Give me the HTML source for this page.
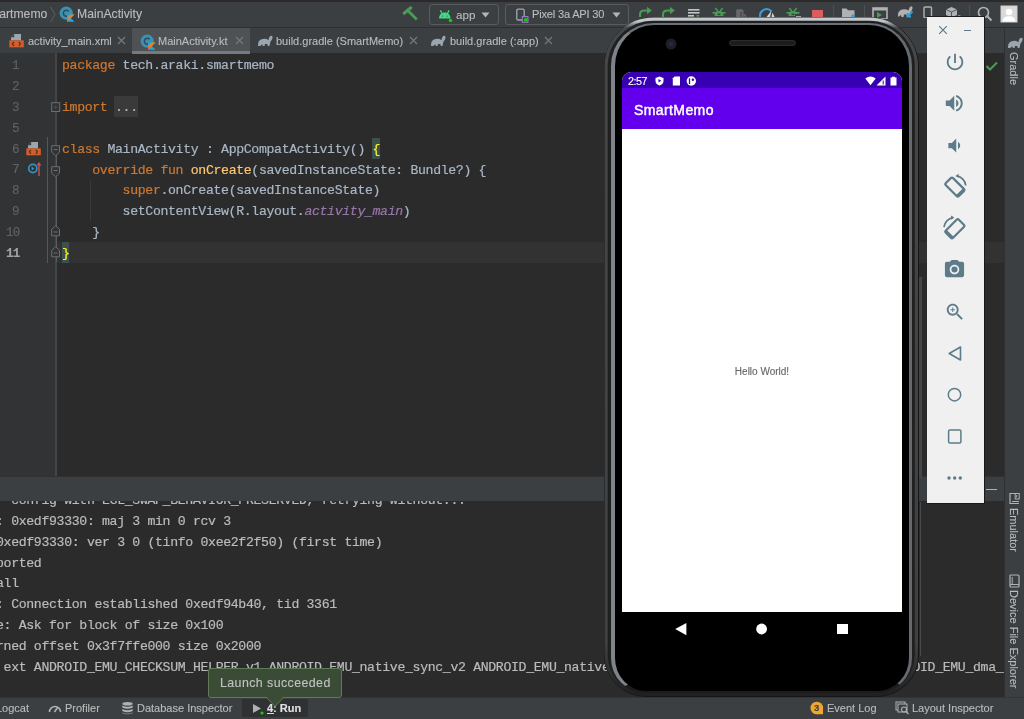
<!DOCTYPE html>
<html><head><meta charset="utf-8">
<style>
*{margin:0;padding:0;box-sizing:border-box}
html,body{width:1024px;height:719px;overflow:hidden;background:#2b2b2b}
body{position:relative;font-family:"Liberation Sans",sans-serif}
.a{position:absolute}
.t{white-space:pre;line-height:1;will-change:transform;-webkit-text-stroke:0.12px}
</style></head><body>
<div class="a" style="left:0px;top:0px;width:1024px;height:2px;background:#2c292b;"></div>
<div class="a" style="left:0px;top:2px;width:1024px;height:25px;background:#3c3f41;"></div>
<div class="a" style="left:0px;top:27px;width:1024px;height:1px;background:#2c2e2f;"></div>
<div class="a" style="left:0px;top:28px;width:1004px;height:25px;background:#3c3f41;"></div>
<div class="a" style="left:0px;top:53px;width:55.5px;height:424px;background:#313335;"></div>
<div class="a" style="left:55.2px;top:53px;width:1.6px;height:424px;background:#434547;"></div>
<div class="a" style="left:56.5px;top:241.5px;width:947.5px;height:21px;background:#323232;"></div>
<div class="a t" style="right:977px;top:8.23px;font-family:'Liberation Sans';font-size:12.2px;color:#bbbbbb;font-weight:400;">smartmemo</div>
<svg class="a" style="left:49px;top:6px;" width="8" height="17" viewBox="0 0 8 17"><path d="M1.5 1 L6 8.5 L1.5 16" fill="none" stroke="#5d5f61" stroke-width="1"/></svg>
<svg class="a" style="left:58.7px;top:6.199999999999999px;" width="17" height="17" viewBox="0 0 17 17"><circle cx="7.2" cy="7.2" r="6.6" fill="#3f8fae"/><path d="M9.6 5.2 A3 3 0 1 0 9.6 9.2" fill="none" stroke="#24505f" stroke-width="1.5"/><rect x="7.2" y="7.5" width="8" height="8" fill="#3c3f41" opacity="0"/><path d="M8 8.5 H15.5 L11.8 12 L15.5 15.8 H8 Z" fill="#1ea7e8"/><path d="M8 15.8 V12 L11.8 8.5 H15.5 Z" fill="#f0811a"/><path d="M8 15.8 V13.5 L9.8 11.6 Z" fill="#d14b8f"/></svg>
<div class="a t" style="left:77px;top:8.23px;font-family:'Liberation Sans';font-size:12.2px;color:#bbbbbb;font-weight:400;">MainActivity</div>
<svg class="a" style="left:398px;top:2px;" width="24" height="24" viewBox="0 0 24 24"><path d="M6.2 11.2 L12.8 5.8" stroke="#4a9c55" stroke-width="3.1" stroke-linecap="round"/><path d="M9.8 8.6 L17.8 16.6" stroke="#4a9c55" stroke-width="2.8" stroke-linecap="square"/></svg>
<div class="a" style="left:428.5px;top:4px;width:70px;height:20.5px;border:1px solid #595c5e;border-radius:3px"></div>
<svg class="a" style="left:437px;top:8px;" width="16" height="14" viewBox="0 0 16 14"><path d="M2 10.6 C2 6.8 4.6 4.6 7.75 4.6 C10.9 4.6 13.5 6.8 13.5 10.6 Z" fill="#3ddc84"/><path d="M3.4 2.4 L5.1 5.6 M12.1 2.4 L10.4 5.6" stroke="#3ddc84" stroke-width="1.2"/><circle cx="5.4" cy="8.2" r="0.6" fill="#2a7a50"/><circle cx="10.1" cy="8.2" r="0.6" fill="#2a7a50"/></svg>
<svg class="a" style="left:448px;top:17.5px;" width="5" height="5" viewBox="0 0 5 5"><circle cx="2.5" cy="2.5" r="1.7" fill="#0bd60b"/></svg>
<div class="a t" style="left:456px;top:9.04px;font-family:'Liberation Sans';font-size:11.6px;color:#bbbbbb;font-weight:400;">app</div>
<svg class="a" style="left:481px;top:11.5px;" width="9" height="6" viewBox="0 0 9 6"><path d="M0.5 0.5 H8.5 L4.5 5.5 Z" fill="#b4b4b4"/></svg>
<div class="a" style="left:504.5px;top:4px;width:124.5px;height:20.5px;border:1px solid #595c5e;border-radius:3px"></div>
<svg class="a" style="left:515px;top:7.5px;" width="15" height="16" viewBox="0 0 15 16"><rect x="1.8" y="1.2" width="7.4" height="10.8" rx="1.2" fill="none" stroke="#9ea9b2" stroke-width="1.3"/><rect x="7.3" y="8.6" width="5.6" height="5.6" fill="#3c3f41" stroke="#a07ccb" stroke-width="1.1"/><circle cx="10.6" cy="11.7" r="1.8" fill="#0bd60b"/></svg>
<div class="a t" style="left:532px;top:8.87px;font-family:'Liberation Sans';font-size:11.1px;color:#bbbbbb;font-weight:400;letter-spacing:-0.2px;">Pixel 3a API 30</div>
<svg class="a" style="left:611.5px;top:11.5px;" width="9" height="6" viewBox="0 0 9 6"><path d="M0.5 0.5 H8.5 L4.5 5.5 Z" fill="#b4b4b4"/></svg>
<svg class="a" style="left:638px;top:6px;" width="15" height="12" viewBox="0 0 15 12"><path d="M2 11 V8.5 Q2 4.5 6.5 4.5 H9.5" fill="none" stroke="#499c54" stroke-width="2"/><path d="M9 0.8 L13.8 4.5 L9 8.2 Z" fill="#499c54"/></svg>
<svg class="a" style="left:661px;top:6px;" width="15" height="12" viewBox="0 0 15 12"><path d="M2 11 V8.5 Q2 4.5 6.5 4.5 H9.5" fill="none" stroke="#499c54" stroke-width="2"/><path d="M9 0.8 L13.8 4.5 L9 8.2 Z" fill="#499c54"/></svg>
<svg class="a" style="left:688px;top:9px;" width="14" height="10" viewBox="0 0 14 10"><rect x="0" y="0" width="11.5" height="1.6" fill="#c4c4c4"/><rect x="0" y="3" width="11.5" height="1.6" fill="#c4c4c4"/><rect x="0" y="6" width="6" height="1.6" fill="#c4c4c4"/><rect x="8.5" y="6" width="2.5" height="1.6" fill="#499c54"/></svg>
<svg class="a" style="left:712px;top:6px;" width="15" height="12" viewBox="0 0 15 12"><path d="M3.3 2 L5.8 5 M10.7 2 L8.2 5" stroke="#499c54" stroke-width="1.5"/><path d="M3 6.2 Q7 3.6 11 6.2 L11.5 10 H2.5 Z" fill="#499c54"/><path d="M0.5 6.8 H13.5" stroke="#499c54" stroke-width="1.6"/><ellipse cx="7" cy="8.3" rx="1.7" ry="0.9" fill="#3c3f41"/></svg>
<svg class="a" style="left:735px;top:8px;" width="12" height="10" viewBox="0 0 12 10"><path d="M1.2 9 V2.4 Q1.2 1.2 2.4 1.2 H6.8 Q8.5 1.2 8.5 3 V9 Z" fill="#686868"/><path d="M8.5 6.5 Q10.3 6.5 10.8 9" fill="none" stroke="#686868" stroke-width="1.4"/><rect x="5" y="4" width="2" height="5" fill="#505050"/></svg>
<svg class="a" style="left:758px;top:6px;" width="18" height="12" viewBox="0 0 18 12"><path d="M2.2 11 A6.5 6.5 0 0 1 13.5 5.5" fill="none" stroke="#389fd6" stroke-width="2"/><path d="M8.5 11 L13.5 4.8 L12 11 Z" fill="#d5d5d5"/><path d="M14.5 6.5 L16.5 11 H13.5 Z" fill="#d5d5d5"/></svg>
<svg class="a" style="left:786px;top:6px;" width="15" height="12" viewBox="0 0 15 12"><path d="M3.3 2 L5.8 5 M10.7 2 L8.2 5" stroke="#499c54" stroke-width="1.5"/><path d="M3 6.2 Q7 3.6 11 6.2 L11.5 10 H2.5 Z" fill="#499c54"/><path d="M0.5 6.8 H13.5" stroke="#499c54" stroke-width="1.6"/><ellipse cx="7" cy="8.3" rx="1.7" ry="0.9" fill="#3c3f41"/><rect x="9" y="8" width="6" height="4" fill="#3c3f41"/><path d="M10 11 H15" stroke="#d5d5d5" stroke-width="1.4"/></svg>
<div class="a" style="left:812px;top:10px;width:11px;height:8px;background:#db5c5c;"></div>
<div class="a" style="left:833px;top:5px;width:1px;height:18px;background:#4d5052;"></div>
<svg class="a" style="left:841px;top:7px;" width="15" height="12" viewBox="0 0 15 12"><path d="M1 1.5 H5.5 L7 3.2 H13.5 V11 H1 Z" fill="#afb1b3"/><rect x="10.5" y="7.5" width="3.2" height="3.2" fill="#389fd6"/></svg>
<div class="a" style="left:864px;top:5px;width:1px;height:18px;background:#4d5052;"></div>
<svg class="a" style="left:872px;top:7px;" width="16" height="12" viewBox="0 0 16 12"><rect x="1" y="1" width="14" height="11" fill="none" stroke="#afb1b3" stroke-width="1.6"/><rect x="1" y="1" width="14" height="2.5" fill="#afb1b3"/><path d="M5 5 L10 8 L5 11 Z" fill="#499c54"/></svg>
<svg class="a" style="left:896px;top:5px;" width="18" height="13" viewBox="0 0 18 13"><path d="M2 12 Q1 6 6 4.5 Q10 3.5 12.5 5.5 Q13 2 15 1.2 Q17 1 16.5 3.5 Q16 6 14 7.5 L13 12 H11 L10.5 9.5 H8 L7.5 12 H5.5 L5 10 Z" fill="#afb1b3"/><path d="M16.5 6.5 L11.5 11.5 M11.5 8 V11.5 H15" stroke="#389fd6" stroke-width="1.8" fill="none"/></svg>
<svg class="a" style="left:922px;top:6px;" width="12" height="12" viewBox="0 0 12 12"><rect x="2" y="1" width="7.5" height="11" rx="1" fill="none" stroke="#afb1b3" stroke-width="1.4"/></svg>
<svg class="a" style="left:945px;top:6px;" width="16" height="12" viewBox="0 0 16 12"><path d="M6.5 1 L12 3.5 V9 L6.5 11.5 L1 9 V3.5 Z" fill="#afb1b3"/><path d="M1 3.5 L6.5 6 L12 3.5 M6.5 6 V11.5" stroke="#3c3f41" stroke-width="0.8" fill="none"/><rect x="13" y="9" width="2.5" height="3" fill="#389fd6"/></svg>
<div class="a" style="left:969px;top:5px;width:1px;height:18px;background:#4d5052;"></div>
<svg class="a" style="left:976px;top:5px;" width="18" height="18" viewBox="0 0 18 18"><circle cx="7.5" cy="7.5" r="5" fill="none" stroke="#afb1b3" stroke-width="1.7"/><path d="M11 11 L15.5 15.5" stroke="#afb1b3" stroke-width="2"/></svg>
<svg class="a" style="left:1000px;top:5px;" width="18" height="18" viewBox="0 0 18 18"><rect x="0.5" y="0.5" width="17" height="17" fill="#cfcfcf"/><rect x="1.5" y="1.5" width="15" height="15" fill="#d9d9d9"/><circle cx="9" cy="7" r="3.3" fill="#fff"/><path d="M2.5 16.5 Q3 11.2 9 11.2 Q15 11.2 15.5 16.5 Z" fill="#fff"/></svg>
<div class="a" style="left:132px;top:28px;width:118px;height:25px;background:#4e5254;"></div>
<div class="a" style="left:132px;top:50.5px;width:118px;height:3px;background:#747a80;"></div>
<svg class="a" style="left:9px;top:33px;" width="16" height="16" viewBox="0 0 16 16"><path d="M5.2 1 H12 V7.5 H2 V4.2 Z" fill="#9aa7b0"/><path d="M2 4.2 L5.2 1 V4.2 Z" fill="#3c3f41"/><rect x="0.3" y="7.3" width="14.5" height="7" fill="#cf5f2d"/><path d="M5 8.8 L3.3 10.8 L5 12.8 M9.8 8.8 L11.5 10.8 L9.8 12.8" fill="none" stroke="#5b2a13" stroke-width="1.1"/></svg>
<div class="a t" style="left:28px;top:35.65px;font-family:'Liberation Sans';font-size:11px;color:#bbbbbb;font-weight:400;">activity_main.xml</div>
<svg class="a" style="left:117px;top:36px;" width="9" height="9" viewBox="0 0 9 9"><path d="M1 1 L8 8 M8 1 L1 8" stroke="#76797b" stroke-width="1.2"/></svg>
<svg class="a" style="left:139.5px;top:33.5px;" width="17" height="17" viewBox="0 0 17 17"><circle cx="7.2" cy="7.2" r="6.6" fill="#3f8fae"/><path d="M9.6 5.2 A3 3 0 1 0 9.6 9.2" fill="none" stroke="#24505f" stroke-width="1.5"/><rect x="7.2" y="7.5" width="8" height="8" fill="#3c3f41" opacity="0"/><path d="M8 8.5 H15.5 L11.8 12 L15.5 15.8 H8 Z" fill="#1ea7e8"/><path d="M8 15.8 V12 L11.8 8.5 H15.5 Z" fill="#f0811a"/><path d="M8 15.8 V13.5 L9.8 11.6 Z" fill="#d14b8f"/></svg>
<div class="a t" style="left:158px;top:35.65px;font-family:'Liberation Sans';font-size:11px;color:#bbbbbb;font-weight:400;">MainActivity.kt</div>
<svg class="a" style="left:235px;top:36px;" width="9" height="9" viewBox="0 0 9 9"><path d="M1 1 L8 8 M8 1 L1 8" stroke="#76797b" stroke-width="1.2"/></svg>
<svg class="a" style="left:257px;top:35px;" width="16" height="12" viewBox="0 0 16 12"><path d="M1 11 Q0.5 5 5.5 4 Q9.5 3.2 11.5 5.2 Q12 1.2 14 0.8 Q16 0.6 15.5 3 Q15 5 13.5 6.5 L12.5 11 H10.8 L10.3 9 H8 L7.5 11 H5.8 L5.3 9.2 L3.2 11 Z" fill="#9aa7b0"/></svg>
<div class="a t" style="left:276px;top:35.65px;font-family:'Liberation Sans';font-size:11px;color:#bbbbbb;font-weight:400;">build.gradle (SmartMemo)</div>
<svg class="a" style="left:408.5px;top:36px;" width="9" height="9" viewBox="0 0 9 9"><path d="M1 1 L8 8 M8 1 L1 8" stroke="#76797b" stroke-width="1.2"/></svg>
<svg class="a" style="left:430px;top:35px;" width="16" height="12" viewBox="0 0 16 12"><path d="M1 11 Q0.5 5 5.5 4 Q9.5 3.2 11.5 5.2 Q12 1.2 14 0.8 Q16 0.6 15.5 3 Q15 5 13.5 6.5 L12.5 11 H10.8 L10.3 9 H8 L7.5 11 H5.8 L5.3 9.2 L3.2 11 Z" fill="#9aa7b0"/></svg>
<div class="a t" style="left:450px;top:35.65px;font-family:'Liberation Sans';font-size:11px;color:#bbbbbb;font-weight:400;">build.gradle (:app)</div>
<svg class="a" style="left:543.5px;top:36px;" width="9" height="9" viewBox="0 0 9 9"><path d="M1 1 L8 8 M8 1 L1 8" stroke="#76797b" stroke-width="1.2"/></svg>
<div class="a t" style="right:1005px;top:60.22px;font-family:'Liberation Mono';font-size:12.6px;color:#606366;font-weight:400;letter-spacing:-0.9px;">1</div>
<div class="a t" style="right:1005px;top:81.05px;font-family:'Liberation Mono';font-size:12.6px;color:#606366;font-weight:400;letter-spacing:-0.9px;">2</div>
<div class="a t" style="right:1005px;top:101.88px;font-family:'Liberation Mono';font-size:12.6px;color:#606366;font-weight:400;letter-spacing:-0.9px;">3</div>
<div class="a t" style="right:1005px;top:122.71px;font-family:'Liberation Mono';font-size:12.6px;color:#606366;font-weight:400;letter-spacing:-0.9px;">5</div>
<div class="a t" style="right:1005px;top:143.54px;font-family:'Liberation Mono';font-size:12.6px;color:#606366;font-weight:400;letter-spacing:-0.9px;">6</div>
<div class="a t" style="right:1005px;top:164.37px;font-family:'Liberation Mono';font-size:12.6px;color:#606366;font-weight:400;letter-spacing:-0.9px;">7</div>
<div class="a t" style="right:1005px;top:185.20px;font-family:'Liberation Mono';font-size:12.6px;color:#606366;font-weight:400;letter-spacing:-0.9px;">8</div>
<div class="a t" style="right:1005px;top:206.03px;font-family:'Liberation Mono';font-size:12.6px;color:#606366;font-weight:400;letter-spacing:-0.9px;">9</div>
<div class="a t" style="right:1005px;top:226.86px;font-family:'Liberation Mono';font-size:12.6px;color:#606366;font-weight:400;letter-spacing:-0.9px;">10</div>
<div class="a t" style="right:1005px;top:247.69px;font-family:'Liberation Mono';font-size:12.6px;color:#a4a3a3;font-weight:700;letter-spacing:-0.9px;">11</div>
<div class="a" style="left:46.5px;top:137px;width:1px;height:125.5px;background:#41625c;"></div>
<div class="a" style="left:55.5px;top:155px;width:1px;height:107px;background:#5a5c5e;"></div>
<svg class="a" style="left:51px;top:144.5px;" width="10" height="12" viewBox="0 0 10 12"><path d="M0.7 0.7 H8.5 V7.2 L4.6 10.8 L0.7 7.2 Z" fill="#313335" stroke="#6c6e70" stroke-width="1"/><path d="M2.6 4.5 H6.6" stroke="#6c6e70" stroke-width="1"/></svg>
<svg class="a" style="left:51px;top:165.5px;" width="10" height="12" viewBox="0 0 10 12"><path d="M0.7 0.7 H8.5 V7.2 L4.6 10.8 L0.7 7.2 Z" fill="#313335" stroke="#6c6e70" stroke-width="1"/><path d="M2.6 4.5 H6.6" stroke="#6c6e70" stroke-width="1"/></svg>
<svg class="a" style="left:51px;top:225px;" width="10" height="12" viewBox="0 0 10 12"><path d="M0.7 10.8 H8.5 V4.3 L4.6 0.7 L0.7 4.3 Z" fill="#313335" stroke="#6c6e70" stroke-width="1"/><path d="M2.6 7 H6.6" stroke="#6c6e70" stroke-width="1"/></svg>
<svg class="a" style="left:51px;top:246px;" width="10" height="12" viewBox="0 0 10 12"><path d="M0.7 10.8 H8.5 V4.3 L4.6 0.7 L0.7 4.3 Z" fill="#313335" stroke="#6c6e70" stroke-width="1"/><path d="M2.6 7 H6.6" stroke="#6c6e70" stroke-width="1"/></svg>
<svg class="a" style="left:51px;top:101.5px;" width="10" height="12" viewBox="0 0 10 12"><rect x="0.7" y="0.7" width="8" height="8.8" fill="#313335" stroke="#6c6e70" stroke-width="1"/><path d="M2.7 5.1 H6.7 M4.7 3.1 V7.1" stroke="#4a4c4e" stroke-width="1"/></svg>
<svg class="a" style="left:25.5px;top:140.5px;" width="16" height="16" viewBox="0 0 16 16"><path d="M5.2 1 H12 V7.5 H2 V4.2 Z" fill="#9aa7b0"/><path d="M2 4.2 L5.2 1 V4.2 Z" fill="#3c3f41"/><rect x="0.3" y="7.3" width="14.5" height="7" fill="#cf5f2d"/><path d="M5 8.8 L3.3 10.8 L5 12.8 M9.8 8.8 L11.5 10.8 L9.8 12.8" fill="none" stroke="#5b2a13" stroke-width="1.1"/></svg>
<svg class="a" style="left:27px;top:161px;" width="16" height="16" viewBox="0 0 16 16"><circle cx="5.8" cy="7.5" r="4.1" fill="none" stroke="#3592c4" stroke-width="1.7"/><path d="M4.6 5.6 L7.4 7.5 L4.6 9.4 Z" fill="#3592c4"/><path d="M12 15 V3" stroke="#c75450" stroke-width="1.4"/><path d="M9.5 4.5 L12 1 L14.5 4.5 Z" fill="#c75450"/></svg>
<div class="a t" style="left:61.5px;top:59.47px;font-family:'Liberation Mono';font-size:13.2px;letter-spacing:-0.34px;color:#a9b7c6;-webkit-text-stroke:0.2px"><span style="color:#cc7832">package</span> tech.araki.smartmemo</div>
<div class="a" style="left:114.06px;top:96.3px;width:24.240000000000002px;height:20.5px;background:#3a3a3a;"></div>
<div class="a t" style="left:61.5px;top:101.13px;font-family:'Liberation Mono';font-size:13.2px;letter-spacing:-0.34px;color:#a9b7c6;-webkit-text-stroke:0.2px"><span style="color:#cc7832">import</span> ...</div>
<div class="a" style="left:372.28000000000003px;top:137.8px;width:7.58px;height:21px;background:#3b514d;"></div>
<div class="a" style="left:61.5px;top:241.5px;width:7.58px;height:21px;background:#3b514d;"></div>
<div class="a t" style="left:61.5px;top:142.79px;font-family:'Liberation Mono';font-size:13.2px;letter-spacing:-0.34px;color:#a9b7c6;-webkit-text-stroke:0.2px"><span style="color:#cc7832">class</span> MainActivity : AppCompatActivity() <span style="color:#ffef28">{</span></div>
<div class="a t" style="left:61.5px;top:163.62px;font-family:'Liberation Mono';font-size:13.2px;letter-spacing:-0.34px;color:#a9b7c6;-webkit-text-stroke:0.2px">    <span style="color:#cc7832">override fun</span> <span style="color:#ffc66d">onCreate</span>(savedInstanceState: Bundle?) {</div>
<div class="a t" style="left:61.5px;top:184.45px;font-family:'Liberation Mono';font-size:13.2px;letter-spacing:-0.34px;color:#a9b7c6;-webkit-text-stroke:0.2px">        <span style="color:#cc7832">super</span>.onCreate(savedInstanceState)</div>
<div class="a t" style="left:61.5px;top:205.28px;font-family:'Liberation Mono';font-size:13.2px;letter-spacing:-0.34px;color:#a9b7c6;-webkit-text-stroke:0.2px">        setContentView(R.layout.<span style="color:#9876aa;font-style:italic">activity_main</span>)</div>
<div class="a t" style="left:61.5px;top:226.11px;font-family:'Liberation Mono';font-size:13.2px;letter-spacing:-0.34px;color:#a9b7c6;-webkit-text-stroke:0.2px">    }</div>
<div class="a t" style="left:61.5px;top:246.94px;font-family:'Liberation Mono';font-size:13.2px;letter-spacing:-0.34px;color:#a9b7c6;-webkit-text-stroke:0.2px"><span style="color:#ffef28">}</span></div>
<div class="a" style="left:90.32px;top:180px;width:1px;height:41px;background:#393939;"></div>
<div class="a t" style="left:-4.5px;top:494.14px;font-family:'Liberation Mono';font-size:13.2px;letter-spacing:-0.34px;color:#bbbbbb;-webkit-text-stroke:0.2px">  config with EGL_SWAP_BEHAVIOR_PRESERVED, retrying without...</div>
<div class="a t" style="left:-4.5px;top:514.97px;font-family:'Liberation Mono';font-size:13.2px;letter-spacing:-0.34px;color:#bbbbbb;-webkit-text-stroke:0.2px">: 0xedf93330: maj 3 min 0 rcv 3</div>
<div class="a t" style="left:-4.5px;top:535.80px;font-family:'Liberation Mono';font-size:13.2px;letter-spacing:-0.34px;color:#bbbbbb;-webkit-text-stroke:0.2px">0xedf93330: ver 3 0 (tinfo 0xee2f2f50) (first time)</div>
<div class="a t" style="left:-4.5px;top:556.63px;font-family:'Liberation Mono';font-size:13.2px;letter-spacing:-0.34px;color:#bbbbbb;-webkit-text-stroke:0.2px">ported</div>
<div class="a t" style="left:-4.5px;top:577.46px;font-family:'Liberation Mono';font-size:13.2px;letter-spacing:-0.34px;color:#bbbbbb;-webkit-text-stroke:0.2px">all</div>
<div class="a t" style="left:-4.5px;top:598.29px;font-family:'Liberation Mono';font-size:13.2px;letter-spacing:-0.34px;color:#bbbbbb;-webkit-text-stroke:0.2px">: Connection established 0xedf94b40, tid 3361</div>
<div class="a t" style="left:-4.5px;top:619.12px;font-family:'Liberation Mono';font-size:13.2px;letter-spacing:-0.34px;color:#bbbbbb;-webkit-text-stroke:0.2px">e: Ask for block of size 0x100</div>
<div class="a t" style="left:-4.5px;top:639.95px;font-family:'Liberation Mono';font-size:13.2px;letter-spacing:-0.34px;color:#bbbbbb;-webkit-text-stroke:0.2px">rned offset 0x3f7ffe000 size 0x2000</div>
<div class="a t" style="left:-4.5px;top:660.78px;font-family:'Liberation Mono';font-size:13.2px;letter-spacing:-0.34px;color:#bbbbbb;-webkit-text-stroke:0.2px"> ext ANDROID_EMU_CHECKSUM_HELPER_v1 ANDROID_EMU_native_sync_v2 ANDROID_EMU_native_sync_v3 ANDROID_EMU_native_sync_v4 ANDROID_EMU_dma_</div>
<div class="a" style="left:0px;top:476.5px;width:1004px;height:24.5px;background:#3c3f41;"></div>
<div class="a" style="left:0px;top:476px;width:1004px;height:0.8px;background:#323232;"></div>
<div class="a" style="left:986px;top:488.5px;width:11px;height:1.5px;background:#afb1b3;"></div>
<div class="a" style="left:0px;top:697px;width:1024px;height:22px;background:#3c3f41;"></div>
<div class="a" style="left:0px;top:697px;width:1024px;height:1px;background:#323436;"></div>
<div class="a" style="left:242px;top:698.5px;width:66px;height:18.5px;background:#2f3133;"></div>
<div class="a t" style="right:995px;top:702.65px;font-family:'Liberation Sans';font-size:11px;color:#bbbbbb;font-weight:400;">Logcat</div>
<svg class="a" style="left:48px;top:703px;" width="14" height="10" viewBox="0 0 14 10"><path d="M1.5 9 A5.5 5.5 0 0 1 12.5 9" fill="none" stroke="#afb1b3" stroke-width="1.6"/><path d="M6.5 9 L9.5 4.5" stroke="#afb1b3" stroke-width="1.6"/></svg>
<div class="a t" style="left:65px;top:702.65px;font-family:'Liberation Sans';font-size:11px;color:#bbbbbb;font-weight:400;">Profiler</div>
<svg class="a" style="left:121px;top:701px;" width="13" height="14" viewBox="0 0 13 14"><ellipse cx="6.5" cy="2.8" rx="5.2" ry="1.8" fill="#afb1b3"/><path d="M1.3 4.5 Q6.5 7 11.7 4.5 V6.5 Q6.5 9 1.3 6.5 Z M1.3 8 Q6.5 10.5 11.7 8 V10 Q6.5 12.5 1.3 10 Z M1.3 11.5 Q6.5 14 11.7 11.5 V12 Q6.5 14.5 1.3 12 Z" fill="#afb1b3"/></svg>
<div class="a t" style="left:137px;top:702.65px;font-family:'Liberation Sans';font-size:11px;color:#bbbbbb;font-weight:400;">Database Inspector</div>
<svg class="a" style="left:252px;top:703px;" width="10" height="11" viewBox="0 0 10 11"><path d="M1 1 L9 5.5 L1 10 Z" fill="#afb1b3"/></svg>
<svg class="a" style="left:259.5px;top:710.5px;" width="4" height="4" viewBox="0 0 4 4"><circle cx="2" cy="2" r="1.6" fill="#0bd60b"/></svg>
<div class="a t" style="left:267px;top:702.65px;font-family:'Liberation Sans';font-size:11px;color:#e0e0e0;font-weight:700;">4: Run</div>
<div class="a" style="left:267px;top:713.2px;width:7px;height:1px;background:#dddddd;"></div>
<svg class="a" style="left:809px;top:700px;" width="16" height="16" viewBox="0 0 16 16"><circle cx="7.8" cy="8" r="6.3" fill="#f0a732"/><path d="M7.8 14.3 H14 V8 Z" fill="#f0a732"/></svg>
<div class="a t" style="left:813.8px;top:703.42px;font-family:'Liberation Sans';font-size:9.5px;color:#3c3f41;font-weight:700;">3</div>
<div class="a t" style="left:827px;top:702.65px;font-family:'Liberation Sans';font-size:11px;color:#bbbbbb;font-weight:400;">Event Log</div>
<svg class="a" style="left:895px;top:701px;" width="15" height="14" viewBox="0 0 15 14"><rect x="1" y="1" width="9" height="8" fill="none" stroke="#afb1b3" stroke-width="1"/><rect x="3" y="3" width="9" height="8" fill="#3c3f41" stroke="#afb1b3" stroke-width="1"/><circle cx="9" cy="8.5" r="2.5" fill="none" stroke="#afb1b3" stroke-width="1.1"/><path d="M10.8 10.3 L13.5 13" stroke="#afb1b3" stroke-width="1.3"/></svg>
<div class="a t" style="left:912px;top:702.65px;font-family:'Liberation Sans';font-size:11px;color:#bbbbbb;font-weight:400;">Layout Inspector</div>
<div class="a" style="left:1004px;top:28px;width:20px;height:669px;background:#3c3f41;"></div>
<div class="a" style="left:1004px;top:28px;width:1px;height:669px;background:#2e3032;"></div>
<svg class="a" style="left:1007px;top:37px;" width="16" height="12" viewBox="0 0 16 12"><path d="M1 11 Q0.5 5 5.5 4 Q9.5 3.2 11.5 5.2 Q12 1.2 14 0.8 Q16 0.6 15.5 3 Q15 5 13.5 6.5 L12.5 11 H10.8 L10.3 9 H8 L7.5 11 H5.8 L5.3 9.2 L3.2 11 Z" fill="#9aa7b0"/></svg>
<div class="a t" style="left:1008px;top:52px;font-size:11px;color:#bbbbbb;writing-mode:vertical-rl">Gradle</div>
<div class="a t" style="left:1008px;top:508px;font-size:11px;color:#bbbbbb;writing-mode:vertical-rl">Emulator</div>
<div class="a t" style="left:1008px;top:590px;font-size:11px;color:#bbbbbb;writing-mode:vertical-rl">Device File Explorer</div>
<svg class="a" style="left:1008px;top:492px;" width="13" height="13" viewBox="0 0 13 13"><path d="M7 1.5 H2 V11.5 H11" fill="none" stroke="#afb1b3" stroke-width="1.2"/><rect x="7.2" y="1.5" width="4" height="5.5" fill="none" stroke="#afb1b3" stroke-width="1"/><path d="M8.6 3 V5.5" stroke="#afb1b3" stroke-width="0.9"/><path d="M4 9.5 H11" stroke="#afb1b3" stroke-width="1"/></svg>
<svg class="a" style="left:1008px;top:574px;" width="13" height="14" viewBox="0 0 13 14"><rect x="2" y="1" width="9" height="12" rx="1" fill="none" stroke="#afb1b3" stroke-width="1.2"/><path d="M4.2 3 V10" stroke="#afb1b3" stroke-width="1"/><path d="M2 10.5 H11" stroke="#afb1b3" stroke-width="1"/></svg>
<svg class="a" style="left:985px;top:60px;" width="14" height="12" viewBox="0 0 14 12"><path d="M1.5 6 L5 9.5 L12 2.5" fill="none" stroke="#499c54" stroke-width="2"/></svg>
<div class="a" style="left:919.4px;top:276.7px;width:2.6px;height:201px;background:#464646;"></div>
<div class="a" style="left:919.5px;top:502px;width:1.2px;height:154px;background:#4a4a4a;"></div>
<div class="a" style="left:603.5px;top:16.5px;width:315.5px;height:680.5px;border-radius:50px 50px 42px 42px;background:#1f2022;border:1px solid #161616"></div>
<svg class="a" style="left:0;top:0" width="1024" height="719"><defs><linearGradient id="rg1" gradientUnits="userSpaceOnUse" x1="0" y1="17" x2="0" y2="697"><stop offset="0" stop-color="#c8cbcf"/><stop offset="0.0062" stop-color="#c0c3c7"/><stop offset="0.016" stop-color="#444648"/><stop offset="0.92" stop-color="#3e4042"/><stop offset="1" stop-color="#1e1f20"/></linearGradient></defs><path d="M653.6 19.1 H868.9 A47.5 47.5 0 0 1 916.4 66.6 V654.9 A39.5 39.5 0 0 1 876.9 694.4 H645.6 A39.5 39.5 0 0 1 606.1 654.9 V66.6 A47.5 47.5 0 0 1 653.6 19.1 Z" fill="none" stroke="url(#rg1)" stroke-width="3.2"/></svg>
<div class="a" style="left:610.5px;top:22.9px;width:301.5px;height:670px;border-radius:43px 43px 35px 35px;background:#000;border:2.8px solid #6c6f73;border-left:4.3px solid #7f8389;border-right:3.9px solid #66696d;border-bottom-color:#1c1c1c"></div>
<svg class="a" style="left:664px;top:37px;" width="14" height="14" viewBox="0 0 14 14"><circle cx="7" cy="7" r="5.5" fill="#1f1f23"/><circle cx="7" cy="7" r="2.3" fill="#1c2a55"/></svg>
<div class="a" style="left:729px;top:40.3px;width:67px;height:6px;border-radius:3px;background:#1c1c1c;border:0.8px solid #2c2c2c"></div>
<div class="a" style="left:621.7px;top:71.7px;width:280px;height:540px;background:#fff;border-radius:9px 9px 0 0;overflow:hidden"><div class="a" style="left:0;top:0;width:280px;height:16.6px;background:#3700b3"></div><div class="a" style="left:0;top:16.6px;width:280px;height:40.5px;background:#6200ee"></div></div>
<div class="a t" style="left:627.8px;top:75.62px;font-family:'Liberation Sans';font-size:10.8px;color:#ffffff;font-weight:400;letter-spacing:-0.5px;">2:57</div>
<svg class="a" style="left:655px;top:76px;" width="10" height="10" viewBox="0 0 10 10"><path d="M4.5 0.5 L8.5 2 V5 Q8.5 8 4.5 9.5 Q0.5 8 0.5 5 V2 Z" fill="#fff"/><path d="M3.5 3 L6.2 4.8 L3.5 6.6 Z" fill="#3700b3"/></svg>
<svg class="a" style="left:671.5px;top:76px;" width="9" height="10" viewBox="0 0 9 10"><path d="M2.5 0.5 H8 V9.5 H0.8 V2.3 Z" fill="#fff"/></svg>
<svg class="a" style="left:686px;top:75.5px;" width="11" height="11" viewBox="0 0 11 11"><circle cx="5.3" cy="5" r="4.7" fill="#fff"/><path d="M3.5 2.3 V8" stroke="#3700b3" stroke-width="1.3"/><circle cx="6.9" cy="3.8" r="1.2" fill="#3700b3"/></svg>
<svg class="a" style="left:864.5px;top:75.5px;" width="12" height="10" viewBox="0 0 12 10"><path d="M0.3 2.6 Q5.5 -1.4 10.7 2.6 L5.5 9.2 Z" fill="#fff"/></svg>
<svg class="a" style="left:876px;top:75.5px;" width="11" height="10" viewBox="0 0 11 10"><path d="M0.5 9.5 L9.5 0.5 V9.5 Z" fill="#fff"/><path d="M7.2 4.5 V8.5" stroke="#3700b3" stroke-width="1"/></svg>
<svg class="a" style="left:889.5px;top:75.5px;" width="8" height="10" viewBox="0 0 8 10"><path d="M2 0.8 H5 V1.5 H6.5 V9.5 H0.5 V1.5 H2 Z" fill="#fff"/></svg>
<div class="a t" style="left:633.7px;top:102.70px;font-family:'Liberation Sans';font-size:14px;color:#ffffff;font-weight:400;letter-spacing:0.4px;-webkit-text-stroke:0.45px #fff;">SmartMemo</div>
<div class="a t" style="left:562px;width:400px;text-align:center;top:367.00px;font-family:'Liberation Sans';font-size:10px;color:#666666;font-weight:400;">Hello World!</div>
<svg class="a" style="left:674px;top:622px;" width="14" height="14" viewBox="0 0 14 14"><path d="M1.2 7 L12.4 1 V13.3 Z" fill="#fff"/></svg>
<svg class="a" style="left:755px;top:622px;" width="14" height="14" viewBox="0 0 14 14"><circle cx="6.6" cy="7" r="5.4" fill="#fff"/></svg>
<div class="a" style="left:836.8px;top:624px;width:11.1px;height:10.3px;background:#fff;"></div>
<div class="a" style="left:926.5px;top:15.8px;width:58.5px;height:488.2px;background:#f0f0f0;border-right:1.2px solid #1a1a1a;border-bottom:1px solid #1a1a1a;border-top:0.8px solid #1e1e1e"></div>
<svg class="a" style="left:938px;top:25px;" width="10" height="10" viewBox="0 0 10 10"><path d="M1.2 1.2 L8.8 8.8 M8.8 1.2 L1.2 8.8" stroke="#5d7b89" stroke-width="1.2"/></svg>
<div class="a" style="left:963.8px;top:29.8px;width:6.8px;height:1.3px;background:#5d7b89;"></div>
<svg class="a" style="left:943.5px;top:51.0px;" width="22" height="22" viewBox="0 0 24 24"><path d="M13 3h-2v10h2V3zm4.83 2.17l-1.42 1.42C17.99 7.86 19 9.81 19 12c0 3.87-3.13 7-7 7s-7-3.13-7-7c0-2.19 1.01-4.14 2.58-5.42L6.17 5.17C4.23 6.82 3 9.26 3 12c0 4.97 4.03 9 9 9s9-4.03 9-9c0-2.74-1.23-5.18-3.17-6.83z" fill="#5d7b89"/></svg>
<svg class="a" style="left:943.25px;top:91.75px;" width="22.5" height="22.5" viewBox="0 0 24 24"><path d="M3 9v6h4l5 5V4L7 9H3zm13.5 3c0-1.77-1.02-3.29-2.5-4.03v8.05c1.48-.73 2.5-2.25 2.5-4.02zM14 3.23v2.06c2.89.86 5 3.54 5 6.71s-2.11 5.85-5 6.71v2.06c4.01-.91 7-4.49 7-8.77s-2.99-7.86-7-8.77z" fill="#5d7b89"/></svg>
<svg class="a" style="left:944.0px;top:134.5px;" width="21" height="21" viewBox="0 0 24 24"><path d="M18.5 12c0-1.77-1.02-3.29-2.5-4.03v8.05c1.48-.73 2.5-2.25 2.5-4.02zM5 9v6h4l5 5V4L9 9H5z" fill="#5d7b89"/></svg>
<svg class="a" style="left:0;top:0" width="1024" height="719"><g transform=""><g transform="rotate(-45 954.85 187.1)"><rect x="949.75" y="177.9" width="10.2" height="18.4" rx="1.6" fill="none" stroke="#5d7b89" stroke-width="2.2"/><rect x="949.75" y="193.7" width="10.2" height="2.6" fill="#5d7b89"/></g><path d="M956.65 175.9 A11 11 0 0 1 965.75 185.5" fill="none" stroke="#5d7b89" stroke-width="1.7"/><path d="M955.45 175.9 L958.65 173.79999999999998 L958.65 178.0 Z" fill="#5d7b89"/></g></svg>
<svg class="a" style="left:0;top:0" width="1024" height="719"><g transform="translate(1909.7 0) scale(-1 1)"><g transform="rotate(-45 954.85 228.8)"><rect x="949.75" y="219.60000000000002" width="10.2" height="18.4" rx="1.6" fill="none" stroke="#5d7b89" stroke-width="2.2"/><rect x="949.75" y="235.4" width="10.2" height="2.6" fill="#5d7b89"/></g><path d="M956.65 217.60000000000002 A11 11 0 0 1 965.75 227.20000000000002" fill="none" stroke="#5d7b89" stroke-width="1.7"/><path d="M955.45 217.60000000000002 L958.65 215.5 L958.65 219.70000000000002 Z" fill="#5d7b89"/></g></svg>
<svg class="a" style="left:943.0px;top:258.0px;" width="23" height="23" viewBox="0 0 24 24"><path d="M12 12m-3.2 0a3.2 3.2 0 1 0 6.4 0a3.2 3.2 0 1 0 -6.4 0M9 2L7.17 4H4c-1.1 0-2 .9-2 2v12c0 1.1.9 2 2 2h16c1.1 0 2-.9 2-2V6c0-1.1-.9-2-2-2h-3.17L15 2H9zm3 15c-2.76 0-5-2.24-5-5s2.24-5 5-5 5 2.24 5 5-2.24 5-5 5z" fill="#5d7b89"/></svg>
<svg class="a" style="left:943.5px;top:300.5px;" width="22" height="22" viewBox="0 0 24 24"><path d="M15.5 14h-.79l-.28-.27C15.41 12.59 16 11.11 16 9.5 16 5.91 13.09 3 9.5 3S3 5.91 3 9.5 5.91 16 9.5 16c1.61 0 3.09-.59 4.23-1.57l.27.28v.79l5 4.99L20.49 19l-4.99-5zm-6 0C7.01 14 5 11.99 5 9.5S7.01 5 9.5 5 14 7.01 14 9.5 11.99 14 9.5 14zm2.5-4h-2v2H9v-2H7V9h2V7h1v2h2v1z" fill="#5d7b89"/></svg>
<svg class="a" style="left:946px;top:345px;" width="18" height="18" viewBox="0 0 18 18"><path d="M3.2 8.5 L14.5 2 V15 Z" fill="none" stroke="#5d7b89" stroke-width="1.6" stroke-linejoin="round"/></svg>
<svg class="a" style="left:946px;top:386px;" width="18" height="18" viewBox="0 0 18 18"><circle cx="8.5" cy="8.7" r="6.2" fill="none" stroke="#5d7b89" stroke-width="1.5"/></svg>
<svg class="a" style="left:946px;top:428px;" width="18" height="18" viewBox="0 0 18 18"><rect x="2.6" y="2" width="12.3" height="13" rx="1.3" fill="none" stroke="#5d7b89" stroke-width="1.5"/></svg>
<svg class="a" style="left:945px;top:474px;" width="20" height="8" viewBox="0 0 20 8"><circle cx="4" cy="4" r="1.7" fill="#5d7b89"/><circle cx="9.7" cy="4" r="1.7" fill="#5d7b89"/><circle cx="15.3" cy="4" r="1.7" fill="#5d7b89"/></svg>
<div class="a" style="left:207.5px;top:668px;width:134.5px;height:30px;background:#3a4b36;border:1px solid #5f7c56;border-radius:3px"></div>
<svg class="a" style="left:266px;top:696.5px;" width="18" height="11" viewBox="0 0 18 11"><path d="M0.5 0.5 L9 9.5 L17.5 0.5" fill="#3a4b36" stroke="#5f7c56" stroke-width="1"/><rect x="1.5" y="0" width="15" height="1.2" fill="#3a4b36"/></svg>
<div class="a t" style="left:219.6px;top:677.06px;font-family:'Liberation Sans';font-size:12.4px;color:#c2c2c2;font-weight:400;letter-spacing:0.42px;">Launch succeeded</div>
</body></html>
